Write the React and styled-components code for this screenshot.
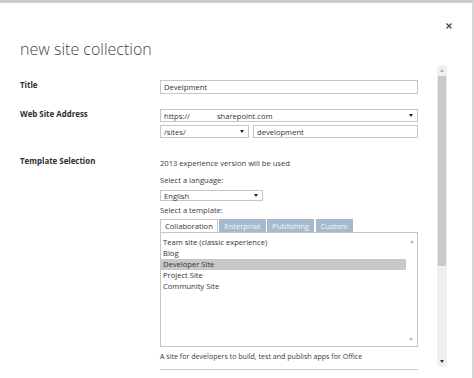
import React from 'react';
import styled, { createGlobalStyle } from 'styled-components';

const Global = createGlobalStyle`
  html, body { margin: 0; padding: 0; background: #fff; }
  body {
    width: 474px; height: 378px; overflow: hidden;
    font-family: "Open Sans", "Noto Sans", sans-serif;
    color: #3a3a3a;
  }
  * { box-sizing: border-box; }
`;

const Dialog = styled.div`
  width: 474px;
  height: 378px;
  border-top: 3px solid #cbcad4;
  border-right: 2px solid #d6d6d8;
  display: flex;
  flex-direction: column;
  background: #fff;
`;

const Header = styled.header`
  height: 62px;
  display: flex;
  justify-content: space-between;
  align-items: flex-start;
  padding: 0 20px 0 20px;
`;

const Heading = styled.h1`
  margin: 36px 0 0 0;
  font-size: 16px;
  line-height: 20px;
  font-weight: 300;
  color: #444;
  white-space: nowrap;
`;

const CloseButton = styled.button`
  margin-top: 20px;
  width: 6px;
  height: 6px;
  padding: 0;
  border: 0;
  background: none;
  display: flex;
  svg { display: block; }
`;

const Main = styled.div`
  flex: 1;
  display: flex;
  align-items: flex-start;
`;

const Form = styled.div`
  flex: 1;
  padding: 15px 0 0 20px;
`;

const Row = styled.div`
  display: grid;
  grid-template-columns: 140px 258px;
  align-items: start;
  margin-top: ${p => p.$mt || 0}px;
`;

const Label = styled.div`
  font-size: 7.9px;
  line-height: 11px;
  font-weight: 700;
  color: #2e2e2e;
  margin-top: ${p => p.$mt || 0}px;
`;

const Stack = styled.div`
  display: flex;
  flex-direction: column;
  align-items: flex-start;
`;

const Field = styled.div`
  width: ${p => (p.$w ? p.$w + 'px' : '100%')};
  flex: ${p => (p.$w ? 'none' : '1 1 auto')};
  height: ${p => p.$h || 13}px;
  border: 1px solid #c6c6c6;
  background: #fff;
  display: flex;
  align-items: center;
  padding: 0 3px;
  font-size: 7.6px;
  color: #333;
  white-space: nowrap;
  margin-top: ${p => p.$mt || 0}px;
`;

const Value = styled.span`
  flex: 1;
  display: flex;
  gap: ${p => p.$gap || 0}px;
`;

const Arrow = styled.span`
  width: 0;
  height: 0;
  border-left: 2px solid transparent;
  border-right: 2px solid transparent;
  border-top: 3px solid ${p => p.$c || '#222'};
  margin-right: 1px;
`;

const UpArrow = styled.span`
  width: 0;
  height: 0;
  border-left: 2px solid transparent;
  border-right: 2px solid transparent;
  border-bottom: 3px solid ${p => p.$c || '#aaa'};
`;

const Pair = styled.div`
  display: flex;
  gap: 4px;
  width: 100%;
  margin-top: 3px;
`;

const Text = styled.div`
  font-size: ${p => p.$fs || 7.6}px;
  line-height: ${p => p.$lh || 11}px;
  color: #3a3a3a;
  white-space: nowrap;
  margin-top: ${p => p.$mt || 0}px;
`;

const Tabs = styled.div`
  display: flex;
  gap: 1.5px;
  margin-top: 3px;
  height: 14px;
`;

const Tab = styled.div`
  height: 14px;
  padding: 0 4px;
  font-size: 7.6px;
  line-height: 13px;
  white-space: nowrap;
  background: ${p => (p.$active ? '#fff' : '#a6bacc')};
  color: ${p => (p.$active ? '#333' : '#f4f7fa')};
  border: 1px solid ${p => (p.$active ? '#c6c6c6' : '#a6bacc')};
  border-bottom: 0;
`;

const ListBox = styled.div`
  width: 258px;
  height: 115px;
  border: 1px solid #c6c6c6;
  display: flex;
  margin-top: -1px;
`;

const Items = styled.div`
  flex: 1;
  padding-top: 4px;
`;

const Item = styled.div`
  height: 11px;
  line-height: 11px;
  font-size: 7.6px;
  padding-left: 2px;
  color: #333;
  background: ${p => (p.$selected ? '#c8c8c8' : 'transparent')};
`;

const InnerScroll = styled.div`
  width: 11px;
  display: flex;
  flex-direction: column;
  justify-content: space-between;
  align-items: center;
  padding: 7px 0 5px;
`;

const Divider = styled.div`
  width: 258px;
  height: 1px;
  background: #c5c9df;
  margin-top: 8px;
`;

const OuterScroll = styled.div`
  width: 10px;
  height: 302px;
  margin-right: 25px;
  background: #f0f0f0;
  display: flex;
  flex-direction: column;
  align-items: center;
  padding: 4px 0 4px;
`;

const Thumb = styled.div`
  width: 8px;
  height: 190px;
  background: #c9c9c9;
  margin-top: 4px;
`;

const Spacer = styled.div`
  flex: 1;
`;

export default function App() {
  return (
    <>
      <Global />
      <Dialog>
        <Header>
          <Heading>new site collection</Heading>
          <CloseButton aria-label="Close">
            <svg width="6" height="6" viewBox="0 0 6 6">
              <path d="M0.5 0.5 L5.5 5.5 M5.5 0.5 L0.5 5.5" stroke="#444" strokeWidth="1.2" />
            </svg>
          </CloseButton>
        </Header>
        <Main>
          <Form>
            <Row>
              <Label>Title</Label>
              <Field $h={14}>Develpment</Field>
            </Row>
            <Row $mt={15}>
              <Label>Web Site Address</Label>
              <Stack>
                <Field>
                  <Value $gap={27}>
                    <span>https://</span>
                    <span>sharepoint.com</span>
                  </Value>
                  <Arrow />
                </Field>
                <Pair>
                  <Field $w={89}>
                    <Value>/sites/</Value>
                    <Arrow />
                  </Field>
                  <Field>development</Field>
                </Pair>
              </Stack>
            </Row>
            <Row $mt={20}>
              <Label $mt={-2}>Template Selection</Label>
              <Stack>
                <Text>2013 experience version will be used</Text>
                <Text $mt={6}>Select a language:</Text>
                <Field $w={103} $h={11} $mt={4}>
                  <Value>English</Value>
                  <Arrow />
                </Field>
                <Text $mt={4}>Select a template:</Text>
                <Tabs>
                  <Tab $active>Collaboration</Tab>
                  <Tab>Enterprise</Tab>
                  <Tab>Publishing</Tab>
                  <Tab>Custom</Tab>
                </Tabs>
                <ListBox>
                  <Items>
                    <Item>Team site (classic experience)</Item>
                    <Item>Blog</Item>
                    <Item $selected>Developer Site</Item>
                    <Item>Project Site</Item>
                    <Item>Community Site</Item>
                  </Items>
                  <InnerScroll>
                    <UpArrow $c="#b5b5b5" />
                    <Arrow $c="#b5b5b5" />
                  </InnerScroll>
                </ListBox>
                <Text $mt={4} $fs={7.1} $lh={10}>A site for developers to build, test and publish apps for Office</Text>
                <Divider />
              </Stack>
            </Row>
          </Form>
          <OuterScroll>
            <UpArrow $c="#b0b0b0" />
            <Thumb />
            <Spacer />
            <Arrow $c="#333" />
          </OuterScroll>
        </Main>
      </Dialog>
    </>
  );
}
